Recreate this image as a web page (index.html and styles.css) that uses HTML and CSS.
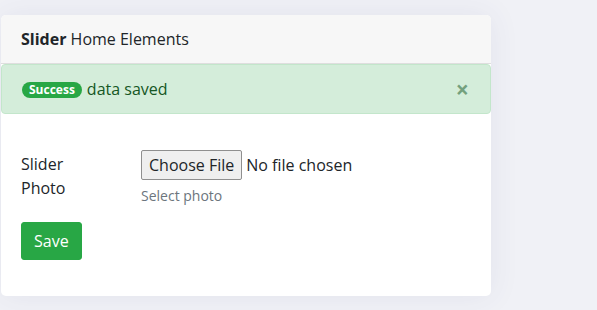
FILE: index.html
```html
<!DOCTYPE html>
<html>
<head>
<meta charset="utf-8">
<link rel="stylesheet" href="styles.css">
</head>
<body>
<div class="page">
  <div class="card">
    <div class="card-header"><b>Slider</b> Home Elements</div>
    <div class="alert">
      <span class="badge">Success</span>
      <span class="alert-text">data saved</span>
      <span class="close">&times;</span>
    </div>
    <div class="card-body">
      <div class="row">
        <label class="label">Slider<br>Photo</label>
        <div class="field">
          <input type="file" class="file">
          <div class="help">Select photo</div>
        </div>
      </div>
      <button class="btn">Save</button>
    </div>
  </div>
</div>
</body>
</html>
```
FILE: styles.css
```css
html, body { margin: 0; padding: 0; }
body {
  background: #f0f1f6;
  font-family: "Open Sans", sans-serif;
  font-size: 16px;
  color: #212529;
  width: 597px;
  height: 310px;
  overflow: hidden;
}
.page { padding: 15px 0 0 1px; }
.card {
  width: 490px;
  background: #fff;
  border-radius: 5px;
  box-shadow: 0 0 30px rgba(60, 70, 130, 0.08);
  overflow: hidden;
}
.card-header {
  background: #f7f7f7;
  padding: 12px 20px;
  line-height: 24px;
  border-bottom: 1px solid #dedede;
  color: #212529;
}
.card-header b { font-weight: 700; }
.alert {
  display: flex;
  align-items: center;
  background: #d4edda;
  border: 1px solid #c3e6cb;
  border-radius: 4px;
  padding: 12px 20px;
  line-height: 24px;
  color: #155724;
  margin-bottom: 16px;
}
.badge {
  background: #28a745;
  color: #fff;
  font-size: 12px;
  font-weight: 700;
  line-height: 16px;
  padding: 0 7px;
  border-radius: 10px;
  margin-right: 5px;
  position: relative;
  top: 1px;
}
.alert-text { flex: 1; }
.close {
  font-size: 23px;
  font-weight: 700;
  color: #155724;
  opacity: 0.5;
  margin-right: 1px;
  line-height: 24px;
}
.card-body { padding: 20px 20px 36px 20px; }
.row { display: flex; margin-bottom: 16px; }
.label {
  width: 120px;
  flex: none;
  line-height: 24px;
  padding-top: 2px;
}
.field { display: flex; flex-direction: column; }
.file {
  font-family: "Open Sans", sans-serif;
  font-size: 16px;
  color: #212529;
  height: 30px;
  padding: 0;
}
.file::file-selector-button {
  font-family: "Open Sans", sans-serif;
  font-size: 16px;
  height: 30px;
  padding: 0 7px;
  margin-right: 4px;
  border: 1px solid #8f8f8f;
  border-radius: 2px;
  background: #efefef;
  color: #212529;
}
.help {
  font-size: 14px;
  color: #6c757d;
  line-height: 21px;
  margin-top: 5px;
}
.btn {
  font-family: "Open Sans", sans-serif;
  font-size: 16px;
  line-height: 24px;
  padding: 6px 12px;
  border: 1px solid #28a745;
  background: #28a745;
  color: #fff;
  border-radius: 3px;
  display: block;
}
```
